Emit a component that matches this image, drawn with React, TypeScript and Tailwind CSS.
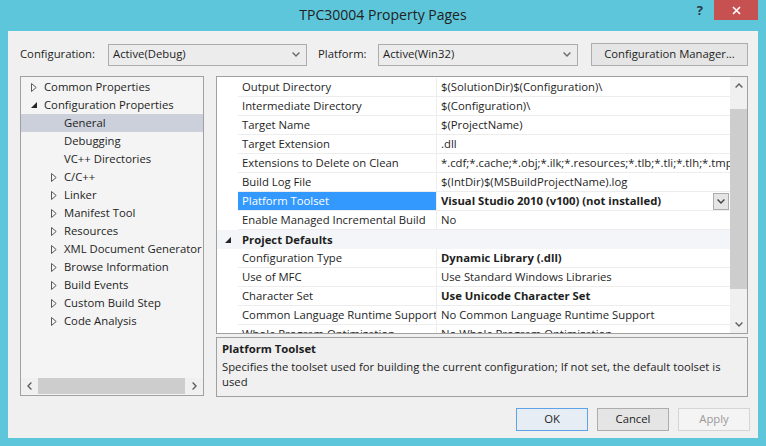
import React from 'react';

type TreeNode = { label: string; level: number; exp?: 'open' | 'closed'; selected?: boolean };

const tree: TreeNode[] = [
  { label: 'Common Properties', level: 0, exp: 'closed' },
  { label: 'Configuration Properties', level: 0, exp: 'open' },
  { label: 'General', level: 1, selected: true },
  { label: 'Debugging', level: 1 },
  { label: 'VC++ Directories', level: 1 },
  { label: 'C/C++', level: 1, exp: 'closed' },
  { label: 'Linker', level: 1, exp: 'closed' },
  { label: 'Manifest Tool', level: 1, exp: 'closed' },
  { label: 'Resources', level: 1, exp: 'closed' },
  { label: 'XML Document Generator', level: 1, exp: 'closed' },
  { label: 'Browse Information', level: 1, exp: 'closed' },
  { label: 'Build Events', level: 1, exp: 'closed' },
  { label: 'Custom Build Step', level: 1, exp: 'closed' },
  { label: 'Code Analysis', level: 1, exp: 'closed' },
];

type Prop = { name: string; value: string; bold?: boolean; selected?: boolean };

const general: Prop[] = [
  { name: 'Output Directory', value: '$(SolutionDir)$(Configuration)\\' },
  { name: 'Intermediate Directory', value: '$(Configuration)\\' },
  { name: 'Target Name', value: '$(ProjectName)' },
  { name: 'Target Extension', value: '.dll' },
  {
    name: 'Extensions to Delete on Clean',
    value: '*.cdf;*.cache;*.obj;*.ilk;*.resources;*.tlb;*.tli;*.tlh;*.tmp;*.rsp;*.pgc;*.pgd;*.meta;$(TargetPath)',
  },
  { name: 'Build Log File', value: '$(IntDir)$(MSBuildProjectName).log' },
  { name: 'Platform Toolset', value: 'Visual Studio 2010 (v100) (not installed)', bold: true, selected: true },
  { name: 'Enable Managed Incremental Build', value: 'No' },
];

const defaults: Prop[] = [
  { name: 'Configuration Type', value: 'Dynamic Library (.dll)', bold: true },
  { name: 'Use of MFC', value: 'Use Standard Windows Libraries' },
  { name: 'Character Set', value: 'Use Unicode Character Set', bold: true },
  { name: 'Common Language Runtime Support', value: 'No Common Language Runtime Support' },
  { name: 'Whole Program Optimization', value: 'No Whole Program Optimization' },
  { name: 'Use of ATL', value: 'Not Using ATL' },
];

const ChevronDown = ({ color = '#555' }: { color?: string }) => (
  <svg width="8" height="5" viewBox="0 0 8 5">
    <path d="M0.6 0.6 L4 4 L7.4 0.6" stroke={color} strokeWidth="1.4" fill="none" />
  </svg>
);

const ChevronUp = () => (
  <svg width="8" height="5" viewBox="0 0 8 5">
    <path d="M0.6 4.4 L4 1 L7.4 4.4" stroke="#606060" strokeWidth="1.4" fill="none" />
  </svg>
);

const ChevronLeft = () => (
  <svg width="5" height="8" viewBox="0 0 5 8">
    <path d="M4.4 0.6 L1 4 L4.4 7.4" stroke="#606060" strokeWidth="1.4" fill="none" />
  </svg>
);

const ChevronRight = () => (
  <svg width="5" height="8" viewBox="0 0 5 8">
    <path d="M0.6 0.6 L4 4 L0.6 7.4" stroke="#606060" strokeWidth="1.4" fill="none" />
  </svg>
);

const Closed = () => (
  <svg width="6" height="9" viewBox="0 0 6 9">
    <path d="M0.5 0.5 L5.2 4.5 L0.5 8.5 Z" fill="none" stroke="#595959" strokeWidth="1" />
  </svg>
);

const Open = () => (
  <svg width="6" height="6" viewBox="0 0 6 6">
    <path d="M6 0 L6 6 L0 6 Z" fill="#262626" />
  </svg>
);

const Combo = ({ value, w }: { value: string; w: string }) => (
  <div className={`${w} h-[22px] border border-[#acacac] bg-[#ececec] flex items-center pl-[4px] pr-[6px]`}>
    <span className="flex-1">{value}</span>
    <ChevronDown color="#6a6a6a" />
  </div>
);

const Button = ({ label, kind }: { label: string; kind?: 'default' | 'disabled' }) => {
  const cls =
    kind === 'default'
      ? 'border-[#5fa3e6] bg-[#e6edf5] text-[#1e1e1e]'
      : kind === 'disabled'
        ? 'border-[#d5d5d5] bg-[#f4f4f4] text-[#9a9a9a]'
        : 'border-[#adadad] bg-[#e5e5e5] text-[#1e1e1e]';
  return <div className={`w-[72px] h-[23px] border ${cls} flex items-center justify-center`}>{label}</div>;
};

const PropRow = ({ p }: { p: Prop }) => (
  <div className="h-[19px] flex bg-white">
    <div className="w-[21px] shrink-0" />
    <div
      className={`w-[199px] shrink-0 border-r border-b border-[#ededed] pl-[4px] whitespace-nowrap overflow-hidden leading-[18px] ${
        p.selected ? 'bg-[#3399ff] text-white' : ''
      }`}
    >
      {p.name}
    </div>
    <div className="flex-1 min-w-0 border-b border-[#ededed] pl-[4px] flex items-center">
      <span className={`flex-1 whitespace-nowrap overflow-hidden leading-[18px] ${p.bold ? 'font-bold' : ''}`}>
        {p.value}
      </span>
      {p.selected && (
        <div className="w-[16px] h-[17px] mr-[1px] border border-[#acacac] bg-[#e5e5e5] flex items-center justify-center">
          <ChevronDown color="#444" />
        </div>
      )}
    </div>
  </div>
);

export default function App() {
  return (
    <div className="w-[766px] h-[446px] bg-[#5dc6db] flex flex-col font-['Open_Sans','Noto_Sans',sans-serif] text-[11.3px] text-[#1e1e1e]">
      {/* title bar */}
      <div className="h-[31px] shrink-0 grid grid-cols-[1fr_auto_1fr]">
        <div />
        <div className="flex items-center text-[14px] text-[#222] pb-[2px]">TPC30004 Property Pages</div>
        <div className="flex justify-end items-start pr-[8px]">
          <div className="mt-[3px] mr-[11px] text-[13px] font-bold text-[#2b3a45] leading-[14px]">?</div>
          <div className="w-[44px] h-[20px] bg-[#c75050] flex items-center justify-center">
            <svg width="9" height="9" viewBox="0 0 9 9">
              <path d="M1 1 L8 8 M8 1 L1 8" stroke="white" strokeWidth="1.6" />
            </svg>
          </div>
        </div>
      </div>

      {/* client area */}
      <div className="mx-[8px] mb-[8px] flex-1 bg-[#f0f0f0] flex flex-col">
        <div className="mt-[12px] pl-[12px] flex items-center">
          <div className="w-[88px]">Configuration:</div>
          <Combo value="Active(Debug)" w="w-[199px]" />
          <div className="ml-[11px] w-[60px]">Platform:</div>
          <Combo value="Active(Win32)" w="w-[200px]" />
          <div className="ml-[13px] w-[157px] h-[23px] border border-[#adadad] bg-[#e5e5e5] flex items-center justify-center">
            Configuration Manager...
          </div>
        </div>

        <div className="mt-[10px] pl-[12px] flex">
          {/* tree */}
          <div className="w-[184px] h-[320px] border border-[#a0a0a0] bg-[#f4f4f4] flex flex-col">
            <div className="flex-1 pt-[1px] overflow-hidden">
              {tree.map((n) => (
                <div
                  key={n.label}
                  className={`h-[18px] flex items-center whitespace-nowrap ${n.selected ? 'bg-[#ccd0db]' : ''} ${
                    n.level === 0 ? 'pl-[10px]' : 'pl-[30px]'
                  }`}
                >
                  <div className="w-[13px] shrink-0 flex items-center">
                    {n.exp === 'closed' && <Closed />}
                    {n.exp === 'open' && <Open />}
                  </div>
                  <span className="leading-[18px]">{n.label}</span>
                </div>
              ))}
            </div>
            <div className="h-[16px] mb-[1px] flex items-center bg-[#f0f0f0]">
              <div className="w-[17px] flex justify-center">
                <ChevronLeft />
              </div>
              <div className="w-[147px] h-[16px] bg-[#cdcdcd]" />
              <div className="flex-1 flex justify-center">
                <ChevronRight />
              </div>
            </div>
          </div>

          <div className="ml-[12px] w-[532px] flex flex-col">
            {/* property grid */}
            <div className="h-[258px] border border-[#a0a0a0] bg-white flex">
              <div className="flex-1 min-w-0 overflow-hidden pt-[1px]">
                {general.map((p) => (
                  <PropRow key={p.name} p={p} />
                ))}
                <div className="h-[19px] flex items-center bg-[#f3f5f8]">
                  <div className="w-[21px] pl-[8px] flex items-center">
                    <Open />
                  </div>
                  <span className="pl-[4px] font-bold leading-[18px]">Project Defaults</span>
                </div>
                {defaults.map((p) => (
                  <PropRow key={p.name} p={p} />
                ))}
              </div>
              <div className="w-[17px] bg-[#f0f0f0] flex flex-col">
                <div className="h-[17px] flex items-center justify-center">
                  <ChevronUp />
                </div>
                <div className="h-[15px]" />
                <div className="h-[180px] bg-[#cdcdcd]" />
                <div className="flex-1" />
                <div className="h-[17px] flex items-center justify-center">
                  <ChevronDown color="#606060" />
                </div>
              </div>
            </div>

            {/* description */}
            <div className="mt-[3px] h-[60px] border border-[#a0a0a0] bg-[#f0f0f0] pl-[5px] pt-[3px]">
              <div className="font-bold leading-[15px]">Platform Toolset</div>
              <div className="mt-[3px] leading-[15px] whitespace-nowrap">
                Specifies the toolset used for building the current configuration; If not set, the default toolset is
              </div>
              <div className="leading-[15px]">used</div>
            </div>
          </div>
        </div>

        <div className="mt-[11px] pr-[8px] flex justify-end gap-[9px]">
          <Button label="OK" kind="default" />
          <Button label="Cancel" />
          <Button label="Apply" kind="disabled" />
        </div>
      </div>
    </div>
  );
}
